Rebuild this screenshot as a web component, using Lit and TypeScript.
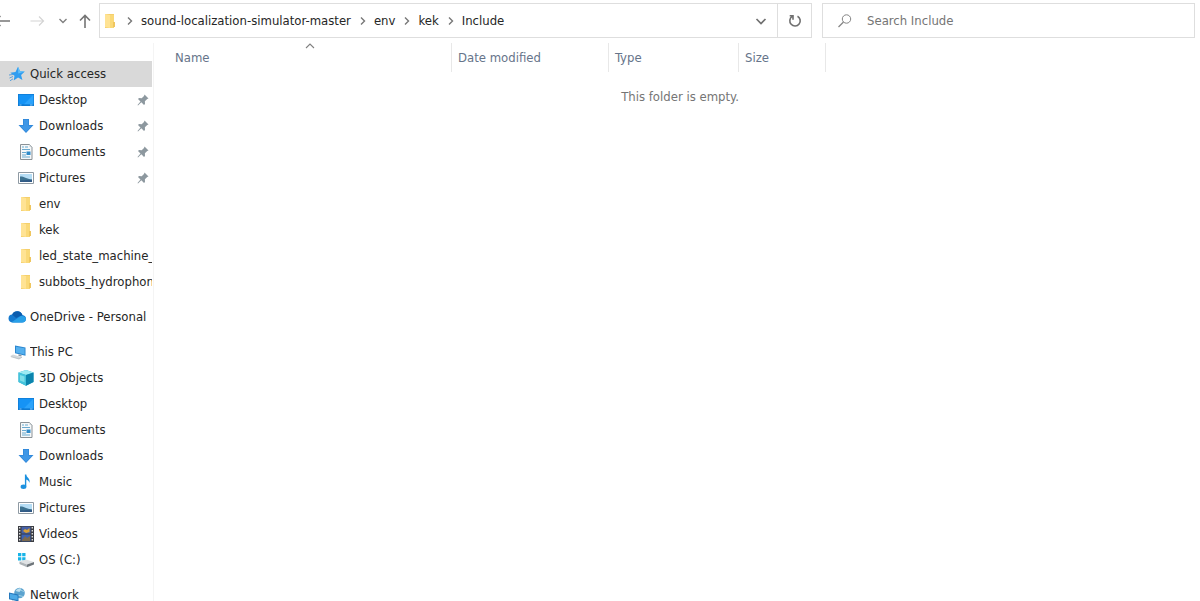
import { LitElement, html, css, svg, nothing, TemplateResult } from "lit";
import { customElement, property } from "lit/decorators.js";

const icons: Record<string, TemplateResult> = {
  folder: svg`
    <path d="M3 1h9v14H3z" fill="#f5cf6b"/>
    <path d="M3 1l5 1v13l-5-1z" fill="#ffe394"/>
    <path d="M8 2h4v12l-1 1H8z" fill="#fad978"/>
    <path d="M11 9h2v5h-2z" fill="#efc65f"/>`,
  star: svg`
    <path d="M9 .8l2 4.500 4.800.3-3.700 3.300 1.300 5-4.300-2.500-4.400 3.100.8-4.700L1.200 6.800l5.300-.9z" fill="#2f9df0"/>
    <path d="M9 .8l2 4.500 4.800.3-6.500 2z" fill="#63c0fa"/>
    <path d="M0 9l4-.5M.5 12l3.500-1.500M1 14.800l3-2" stroke="#5b9fd8" stroke-width="1"/>`,
  desktop: svg`
    <path d="M0 2h16v12H0z" fill="#0f7ad2"/>
    <path d="M.7 2.700h14.600v9.600H.7z" fill="#1593f5"/>
    <path d="M15.300 2.700v9.600H6z" fill="#2ba3fb"/>
    <path d="M1.500 13h2M12 13h2.500" stroke="#9ed4fb" stroke-width=".8"/>`,
  download: svg`<path d="M5 1h6v6h4.500L8 15 .5 7H5z" fill="#2f86d8"/><path d="M5.700 1.700h4.600v6H14L8 14 2 7.700h3.700z" fill="#3f97e6"/>`,
  document: svg`
    <path d="M2.500.5h9l2.500 2.500v12.500H2.500z" fill="#f6f8f9" stroke="#8b9297"/>
    <path d="M11.500.5V3H14z" fill="#c9d0d4"/>
    <path d="M4 3h2M7 3h3M4 5.500h8M4 8.500h4M4 11h4M4 13h8" stroke="#69a9cf" stroke-width="1.200"/>
    <path d="M8.500 7.500h4v3.500h-4z" fill="#2f8bc9"/>`,
  picture: svg`
    <path d="M.5 2.500h15v11H.5z" fill="#fff" stroke="#8f9aa3"/>
    <path d="M2 4h12v8H2z" fill="#b5ddf5"/>
    <path d="M2 6.500c3-.5 6 2 12 3V12H2z" fill="#3d7391"/>
    <path d="M2 10.500l12-.8V12H2z" fill="#315a86"/>`,
  cloud: svg`
    <path d="M4 13.500C1.500 13.500-.5 12-.5 9.500s1.500-4 3.700-4C4.200 3.500 6 2.300 8.300 2.300c2.500 0 4.400 1.500 5.100 3.700 2.200.2 3.600 1.800 3.600 3.700 0 2.200-1.500 3.800-4 3.800z" fill="#1479cf"/>
    <path d="M3.200 5.500C4.200 3.500 6 2.300 8.300 2.300c2.500 0 4.400 1.500 5.100 3.700L7 9z" fill="#0b5cad"/>
    <path d="M2.500 13.200L11 7.500c2-1 6 0 6 2.500 0 2-1.500 3.500-4 3.500H4z" fill="#28a0e8"/>`,
  pc: svg`
    <path d="M6 1.500l10.500 2v8.300L6 9.300z" fill="#2a86cf"/>
    <path d="M7 2.700l8.600 1.600v6.200L7 8.500z" fill="#55b0ee"/>
    <path d="M9.500 10.200l3 .7v1.500l-3-.5z" fill="#8a98a3"/>
    <path d="M1 12.200l3-1.700 9 2.700-3 2z" fill="#d3d8dc"/>
    <path d="M2 12.700l8 2.300 3-1.800" stroke="#a6aeb3" stroke-width=".6" fill="none"/>`,
  cube: svg`
    <path d="M8 0l7.500 2.500v9.500L8 15.700.5 12V2.500z" fill="#27a9c9"/>
    <path d="M8 0l7.500 2.500L8 5 .5 2.500z" fill="#9debf3"/>
    <path d="M.5 2.500L8 5v10.700L.5 12z" fill="#45c4dc"/>
    <path d="M8 5l7.500-2.500v9.500L8 15.700z" fill="#0b84ad"/>
    <path d="M2 5l4.500 1.500v5.800L2 10.500z" fill="#7fdfea"/>`,
  music: svg`
    <path d="M8 .5c.5 3 4.500 3.500 3.500 8.500-.5-2-1.500-3-3.500-3.500z" fill="#1c91df"/>
    <path d="M7.600.5v12" stroke="#1c91df" stroke-width="1.400"/>
    <ellipse cx="5.500" cy="12.700" rx="2.900" ry="2.200" fill="#1c91df"/>`,
  video: svg`
    <path d="M0 0h16v16H0z" fill="#3b3d42"/>
    <path d="M3.500.7h9v6.800h-9z" fill="#4661a8"/><path d="M3.500 8.500h9v6.800h-9z" fill="#3b62b5"/>
    <path d="M5 5l2-2 2 1 2.500-2v4L8 7z" fill="#d9a136"/><path d="M4 14l3-4 2 2 3-2v5H4z" fill="#7b6a50"/>
    <path d="M1.700 1v14M14.300 1v14" stroke="#d9dbdd" stroke-width="1.400" stroke-dasharray="1.500 1.500"/>`,
  drive: svg`
    <path d="M0 1h3.300v3.300H0zM4.200 1h3.300v3.300H4.200zM0 5.200h3.300v3.300H0zM4.200 5.200h3.300v3.300H4.200z" fill="#17b4e8"/>
    <path d="M1.500 9.500L8 7.500l8 2.500-7 2.500z" fill="#dfe2e4"/>
    <path d="M1.500 9.500L9 12.500v2.800L1.500 12z" fill="#aeb4b8"/>
    <path d="M9 12.500l7-2.500v2.500L9 15.300z" fill="#6f767b"/>`,
  network: svg`
    <circle cx="10.500" cy="6" r="5.300" fill="#5ba3cf"/>
    <path d="M6.500 4c2-3 5-3.300 6-2.300L10.500 5z" fill="#bfe0ef"/>
    <path d="M11 3l4 1.500M8 8l6 1.500" stroke="#9fcfe6" fill="none"/>
    <path d="M0 5.500l9.500 2v7L0 12.300z" fill="#2579bd"/>
    <path d="M1 6.800l7.600 1.600v4.700L1 11.400z" fill="#4ca9e6"/>
    <path d="M3 14l6 1.500" stroke="#9aa5ac"/>`,
  pin: svg`<path d="M9.500 2.500l4 4-1.300.4-2.300 2.300.1 2.800-1 .9-2.700-2.700L3 13.400l-.5-.5 3-3.300L3 7.100l1-1 2.700.1 2.300-2.300z" fill="#8d989f"/>`,
  back: svg`<path d="M16 8H1.500M6.500 3l-5 5 5 5" fill="none" stroke="#777" stroke-width="1.300"/>`,
  forward: svg`<path d="M1.500 8h13M10 3.500L14.500 8 10 12.500" fill="none" stroke="#d4d4d4" stroke-width="1.200"/>`,
  up: svg`<path d="M8 15V2.500M3 7.500l5-5 5 5" fill="none" stroke="#757575" stroke-width="1.600"/>`,
  down: svg`<path d="M4.500 6L8 9.500 11.500 6" fill="none" stroke="#808080" stroke-width="1.400"/>`,
  open: svg`<path d="M3.500 6L8 10.500 12.500 6" fill="none" stroke="#707070" stroke-width="1.700"/>`,
  next: svg`<path d="M6 4.500L9.500 8 6 11.500" fill="none" stroke="#777" stroke-width="1.400"/>`,
  sorted: svg`<path d="M4 10l4-4 4 4" fill="none" stroke="#808080" stroke-width="1.100"/>`,
  refresh: svg`<path d="M10.500 3.200a5.200 5.200 0 1 1-5.300.2M2.700 2.800H6v4" fill="none" stroke="#707070" stroke-width="1.600"/>`,
  search: svg`<circle cx="9.500" cy="6" r="4.200" fill="none" stroke="#858585"/><path d="M6.500 9l-5 5" stroke="#858585" stroke-width="1.200"/>`,
};

const icon = (name: string) => html`<svg class="icon" viewBox="0 0 16 16" aria-hidden="true">${icons[name]}</svg>`;

const shared = css`
  * { box-sizing: border-box; }
  .icon { display: block; flex: none; width: 16px; height: 16px; overflow: visible; }
  button { margin: 0; padding: 0; border: 0; background: none; font: inherit; color: inherit; }
  a { color: inherit; text-decoration: none; }
`;

interface Place { label: string; icon: string; pinned?: boolean; }
interface Group extends Place { selected?: boolean; children: Place[]; }

const groups: Group[] = [
  {
    label: "Quick access", icon: "star", selected: true,
    children: [
      { label: "Desktop", icon: "desktop", pinned: true },
      { label: "Downloads", icon: "download", pinned: true },
      { label: "Documents", icon: "document", pinned: true },
      { label: "Pictures", icon: "picture", pinned: true },
      { label: "env", icon: "folder" },
      { label: "kek", icon: "folder" },
      { label: "led_state_machine_lib", icon: "folder" },
      { label: "subbots_hydrophones", icon: "folder" },
    ],
  },
  { label: "OneDrive - Personal", icon: "cloud", children: [] },
  {
    label: "This PC", icon: "pc",
    children: [
      { label: "3D Objects", icon: "cube" },
      { label: "Desktop", icon: "desktop" },
      { label: "Documents", icon: "document" },
      { label: "Downloads", icon: "download" },
      { label: "Music", icon: "music" },
      { label: "Pictures", icon: "picture" },
      { label: "Videos", icon: "video" },
      { label: "OS (C:)", icon: "drive" },
    ],
  },
  { label: "Network", icon: "network", children: [] },
];

@customElement("address-bar")
class AddressBar extends LitElement {
  @property({ type: Array }) path: string[] = [];

  static styles = [shared, css`
    :host {
      display: grid; grid-template-columns: 89px minmax(0, 713fr) minmax(0, 373fr); column-gap: 10px;
      align-items: center; padding: 3px 5px 0 0; color: #262626;
    }
    .nav { display: flex; align-items: center; overflow: hidden; padding: 2px 0; margin-right: -10px; }
    .back { margin-left: -6px; }
    .forward { margin-left: 19px; }
    .recent { margin-left: 10px; }
    .up { margin-left: 6px; }
    .box { display: flex; align-items: center; height: 35px; border: 1px solid #dedede; background: #fff; }
    .path { padding-left: 2px; }
    .crumbs { display: flex; align-items: center; flex: 1; min-width: 0; margin: 0; padding: 0; list-style: none; white-space: nowrap; overflow: hidden; }
    .crumb { display: flex; align-items: center; }
    .crumb .icon { margin: 0 3px 0 4px; }
    .open { padding: 0 8px; }
    .refresh { display: flex; align-items: center; justify-content: center; width: 34px; height: 33px; border-left: 1px solid #dedede; }
    .search { padding-left: 14px; gap: 14px; }
    .field { flex: 1; min-width: 0; padding: 0; border: 0; outline: 0; background: none; font: inherit; color: #262626; }
    .field::placeholder { color: #757575; opacity: 1; }
  `];

  render() {
    return html`
      <nav class="nav" aria-label="History">
        <button class="back" aria-label="Back">${icon("back")}</button>
        <button class="forward" aria-label="Forward" disabled>${icon("forward")}</button>
        <button class="recent" aria-label="Recent locations">${icon("down")}</button>
        <button class="up" aria-label="Up">${icon("up")}</button>
      </nav>
      <div class="box path">
        ${icon("folder")}
        <ol class="crumbs">
          ${this.path.map((p) => html`<li class="crumb">${icon("next")}<a href="#">${p}</a></li>`)}
        </ol>
        <button class="open" aria-label="Previous locations">${icon("open")}</button>
        <button class="refresh" aria-label="Refresh">${icon("refresh")}</button>
      </div>
      <label class="box search">
        ${icon("search")}
        <input class="field" type="text" aria-label="Search Include" placeholder="Search Include" />
      </label>`;
  }
}

@customElement("places-tree")
class PlacesTree extends LitElement {
  static styles = [shared, css`
    :host { display: block; padding: 18px 1px 0 0; overflow: hidden; color: #262626; border-right: 1px solid #f4f4f4; }
    .group { margin-bottom: 9px; }
    .list { margin: 0; padding: 0; list-style: none; }
    .row { display: flex; align-items: center; height: 26px; padding-left: 9px; gap: 5px; white-space: nowrap; }
    .child { padding-left: 18px; }
    .selected { background: #d9d9d9; }
    .label { flex: 1; min-width: 0; overflow: hidden; }
    .pin { flex: none; width: 17px; }
  `];

  private row(p: Place, cls: string) {
    return html`<a class="row ${cls}" href="#">
      ${icon(p.icon)}<span class="label">${p.label}</span>
      ${p.pinned ? html`<span class="pin">${icon("pin")}</span>` : nothing}
    </a>`;
  }

  render() {
    return groups.map((g) => html`
      <div class="group">
        ${this.row(g, g.selected ? "selected" : "")}
        <ul class="list">${g.children.map((c) => html`<li>${this.row(c, "child")}</li>`)}</ul>
      </div>`);
  }
}

@customElement("file-list")
class FileList extends LitElement {
  static styles = [shared, css`
    :host { display: block; min-width: 0; }
    .files { width: 100%; table-layout: fixed; border-collapse: separate; border-spacing: 0; }
    .name { width: 298px; }
    .date { width: 157px; }
    .type { width: 130px; }
    .size { width: 87px; }
    .head { position: relative; height: 29px; padding: 0 0 0 6px; border-right: 1px solid #e8e8e8; text-align: left; font-weight: 400; color: #66748a; }
    .head.name { padding-left: 21px; }
    .rest { padding: 0; }
    .mark { position: absolute; top: -5px; left: 50%; margin-left: -1px; }
    .empty { padding: 15px 0 0 6px; text-align: center; color: #757575; }
  `];

  render() {
    return html`
      <table class="files">
        <thead>
          <tr>
            <th class="head name" aria-sort="ascending"><button>Name</button><span class="mark">${icon("sorted")}</span></th>
            <th class="head date"><button>Date modified</button></th>
            <th class="head type"><button>Type</button></th>
            <th class="head size"><button>Size</button></th>
            <td class="rest"></td>
          </tr>
        </thead>
        <tbody>
          <tr><td class="empty" colspan="5">This folder is empty.</td></tr>
        </tbody>
      </table>`;
  }
}

@customElement("app-root")
class AppRoot extends LitElement {
  static styles = [shared, css`
    :host {
      display: flex; flex-direction: column; height: 100vh; overflow: hidden; background: #fff;
      font: 13px/20px "DejaVu Sans Condensed", "Open Sans", sans-serif;
    }
    .body { display: grid; grid-template-columns: 154px 1fr; flex: 1; min-height: 0; padding-top: 5px; }
  `];

  render() {
    return html`
      <address-bar .path=${["sound-localization-simulator-master", "env", "kek", "Include"]}></address-bar>
      <main class="body">
        <places-tree></places-tree>
        <file-list></file-list>
      </main>`;
  }
}
